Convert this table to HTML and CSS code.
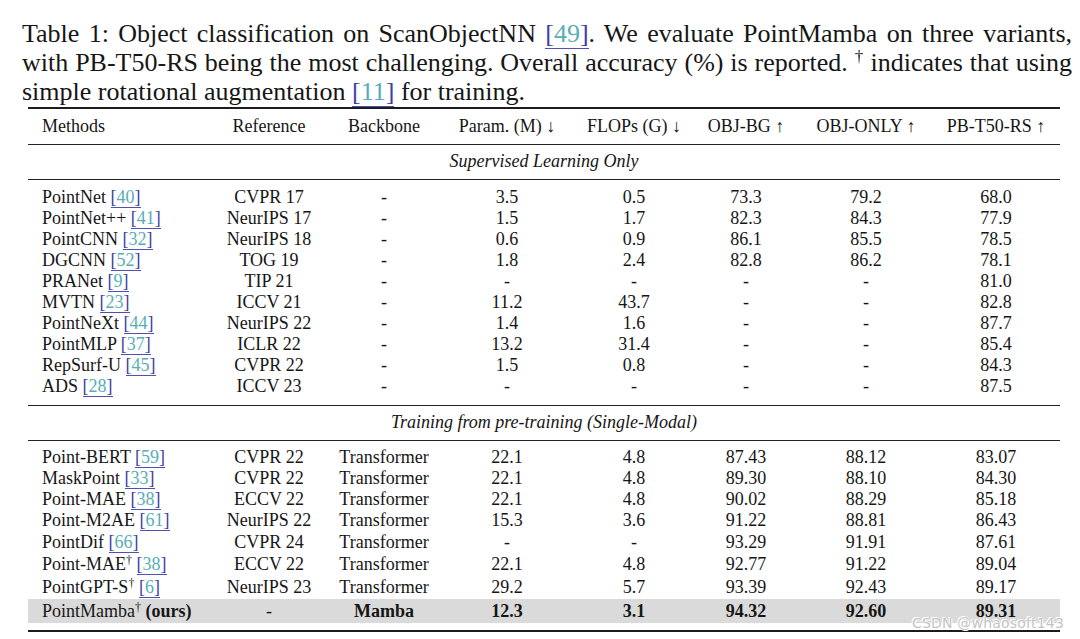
FILE: index.html
```html
<!DOCTYPE html>
<html>
<head>
<meta charset="utf-8">
<link rel="stylesheet" href="styles.css">
</head>
<body>
<div class="page">
  <p class="caption">
    <span class="ln">Table 1: Object classification on ScanObjectNN <span class="cite"><span class="br">[</span>49<span class="br">]</span></span>. We evaluate PointMamba on three variants,</span>
    <span class="ln">with PB-T50-RS being the most challenging. Overall accuracy (%) is reported. <sup>†</sup> indicates that using</span>
    <span class="ln last">simple rotational augmentation <span class="cite"><span class="br">[</span>11<span class="br">]</span></span> for training.</span>
  </p>
  <table class="results">
    <colgroup>
      <col class="c-method"><col class="c-ref"><col class="c-bb"><col class="c-param"><col class="c-flops"><col class="c-bg"><col class="c-only"><col class="c-pb">
    </colgroup>
    <thead>
      <tr class="head">
        <th class="method">Methods</th><th>Reference</th><th>Backbone</th><th>Param. (M) ↓</th><th>FLOPs (G) ↓</th><th>OBJ-BG ↑</th><th>OBJ-ONLY ↑</th><th>PB-T50-RS ↑</th>
      </tr>
    </thead>
    <tbody>
      <tr class="section"><td colspan="8">Supervised Learning Only</td></tr>
      <tr class="gap g7"><td colspan="8"></td></tr>
      <tr><td class="method">PointNet <span class="cite"><span class="br">[</span>40<span class="br">]</span></span></td><td>CVPR 17</td><td>-</td><td>3.5</td><td>0.5</td><td>73.3</td><td>79.2</td><td>68.0</td></tr>
      <tr><td class="method">PointNet++ <span class="cite"><span class="br">[</span>41<span class="br">]</span></span></td><td>NeurIPS 17</td><td>-</td><td>1.5</td><td>1.7</td><td>82.3</td><td>84.3</td><td>77.9</td></tr>
      <tr><td class="method">PointCNN <span class="cite"><span class="br">[</span>32<span class="br">]</span></span></td><td>NeurIPS 18</td><td>-</td><td>0.6</td><td>0.9</td><td>86.1</td><td>85.5</td><td>78.5</td></tr>
      <tr><td class="method">DGCNN <span class="cite"><span class="br">[</span>52<span class="br">]</span></span></td><td>TOG 19</td><td>-</td><td>1.8</td><td>2.4</td><td>82.8</td><td>86.2</td><td>78.1</td></tr>
      <tr><td class="method">PRANet <span class="cite"><span class="br">[</span>9<span class="br">]</span></span></td><td>TIP 21</td><td>-</td><td>-</td><td>-</td><td>-</td><td>-</td><td>81.0</td></tr>
      <tr><td class="method">MVTN <span class="cite"><span class="br">[</span>23<span class="br">]</span></span></td><td>ICCV 21</td><td>-</td><td>11.2</td><td>43.7</td><td>-</td><td>-</td><td>82.8</td></tr>
      <tr><td class="method">PointNeXt <span class="cite"><span class="br">[</span>44<span class="br">]</span></span></td><td>NeurIPS 22</td><td>-</td><td>1.4</td><td>1.6</td><td>-</td><td>-</td><td>87.7</td></tr>
      <tr><td class="method">PointMLP <span class="cite"><span class="br">[</span>37<span class="br">]</span></span></td><td>ICLR 22</td><td>-</td><td>13.2</td><td>31.4</td><td>-</td><td>-</td><td>85.4</td></tr>
      <tr><td class="method">RepSurf-U <span class="cite"><span class="br">[</span>45<span class="br">]</span></span></td><td>CVPR 22</td><td>-</td><td>1.5</td><td>0.8</td><td>-</td><td>-</td><td>84.3</td></tr>
      <tr><td class="method">ADS <span class="cite"><span class="br">[</span>28<span class="br">]</span></span></td><td>ICCV 23</td><td>-</td><td>-</td><td>-</td><td>-</td><td>-</td><td>87.5</td></tr>
      <tr class="gap g8 ruled"><td colspan="8"></td></tr>
      <tr class="section"><td colspan="8">Training from pre-training (Single-Modal)</td></tr>
      <tr class="gap"><td colspan="8"></td></tr>
      <tr><td class="method">Point-BERT <span class="cite"><span class="br">[</span>59<span class="br">]</span></span></td><td>CVPR 22</td><td>Transformer</td><td>22.1</td><td>4.8</td><td>87.43</td><td>88.12</td><td>83.07</td></tr>
      <tr><td class="method">MaskPoint <span class="cite"><span class="br">[</span>33<span class="br">]</span></span></td><td>CVPR 22</td><td>Transformer</td><td>22.1</td><td>4.8</td><td>89.30</td><td>88.10</td><td>84.30</td></tr>
      <tr><td class="method">Point-MAE <span class="cite"><span class="br">[</span>38<span class="br">]</span></span></td><td>ECCV 22</td><td>Transformer</td><td>22.1</td><td>4.8</td><td>90.02</td><td>88.29</td><td>85.18</td></tr>
      <tr><td class="method">Point-M2AE <span class="cite"><span class="br">[</span>61<span class="br">]</span></span></td><td>NeurIPS 22</td><td>Transformer</td><td>15.3</td><td>3.6</td><td>91.22</td><td>88.81</td><td>86.43</td></tr>
      <tr class="r22"><td class="method">PointDif <span class="cite"><span class="br">[</span>66<span class="br">]</span></span></td><td>CVPR 24</td><td>Transformer</td><td>-</td><td>-</td><td>93.29</td><td>91.91</td><td>87.61</td></tr>
      <tr class="r23"><td class="method">Point-MAE<sup>†</sup> <span class="cite"><span class="br">[</span>38<span class="br">]</span></span></td><td>ECCV 22</td><td>Transformer</td><td>22.1</td><td>4.8</td><td>92.77</td><td>91.22</td><td>89.04</td></tr>
      <tr class="r23"><td class="method">PointGPT-S<sup>†</sup> <span class="cite"><span class="br">[</span>6<span class="br">]</span></span></td><td>NeurIPS 23</td><td>Transformer</td><td>29.2</td><td>5.7</td><td>93.39</td><td>92.43</td><td>89.17</td></tr>
      <tr class="ours"><td class="method">PointMamba<sup>†</sup> <b>(ours)</b></td><td>-</td><td><b>Mamba</b></td><td><b>12.3</b></td><td><b>3.1</b></td><td><b>94.32</b></td><td><b>92.60</b></td><td><b>89.31</b></td></tr>
      <tr class="gap g7"><td colspan="8"></td></tr>
    </tbody>
  </table>
  <div class="watermark">CSDN @whaosoft143</div>
</div>
</body>
</html>
```

FILE: styles.css
```css
html, body {
  margin: 0;
  padding: 0;
  background: #ffffff;
}

.page {
  position: relative;
  width: 1080px;
  height: 639px;
  overflow: hidden;
  font-family: "Liberation Serif", "Times New Roman", serif;
  color: #161616;
}

.caption {
  margin: 19px 0 0 22px;
  width: 1050px;
  font-size: 26px;
  line-height: 29px;
}

.caption .ln {
  display: block;
  text-align: justify;
  text-align-last: justify;
}

.caption .ln.last {
  text-align-last: left;
}

.caption sup {
  font-size: 17px;
  line-height: 0;
  vertical-align: 9px;
}

.cite {
  color: #58aeb6;
  border-bottom: 1px solid #4f4fb4;
}

.cite .br {
  color: #3d3da6;
}

.results {
  margin: 1px 0 0 28px;
  width: 1032px;
  table-layout: fixed;
  border-collapse: collapse;
  font-size: 18px;
  line-height: 21px;
  border-top: 2px solid #1c1c1c;
  border-bottom: 2px solid #1c1c1c;
}

.c-method { width: 180px; }
.c-ref { width: 122px; }
.c-bb { width: 108px; }
.c-param { width: 138px; }
.c-flops { width: 116px; }
.c-bg { width: 108px; }
.c-only { width: 132px; }
.c-pb { width: 128px; }

.results th,
.results td {
  padding: 0;
  text-align: center;
  font-weight: normal;
  white-space: nowrap;
  height: 21px;
}

.results .method {
  text-align: left;
  padding-left: 14px;
}

.results .head th {
  padding-top: 7px;
  padding-bottom: 7px;
  border-bottom: 1px solid #222;
}

.results .section td {
  font-style: italic;
  padding-top: 6px;
  padding-bottom: 7px;
  border-bottom: 1px solid #222;
}

.results .gap td {
  height: 6px;
  padding: 0;
  line-height: 0;
}

.results .gap.g7 td { height: 7px; }
.results .gap.g8 td { height: 8px; }

.results .gap.ruled td {
  border-bottom: 1px solid #222;
}

.results .r22 td { height: 22px; }
.results .r23 td { height: 23px; }

.results .ours td {
  height: 24px;
  background: #dadada;
}

.results sup {
  font-size: 12px;
  line-height: 0;
  vertical-align: 6px;
}

.results b {
  font-weight: bold;
}

.watermark {
  position: absolute;
  right: 16px;
  bottom: 8px;
  font-family: "DejaVu Sans", sans-serif;
  font-size: 14px;
  letter-spacing: 0.2px;
  color: #c4c4c4;
  text-shadow: 0 0 1px #fff, 0 0 1px #fff, 1px 1px 0 #fff, -1px -1px 0 #fff;
}
```
